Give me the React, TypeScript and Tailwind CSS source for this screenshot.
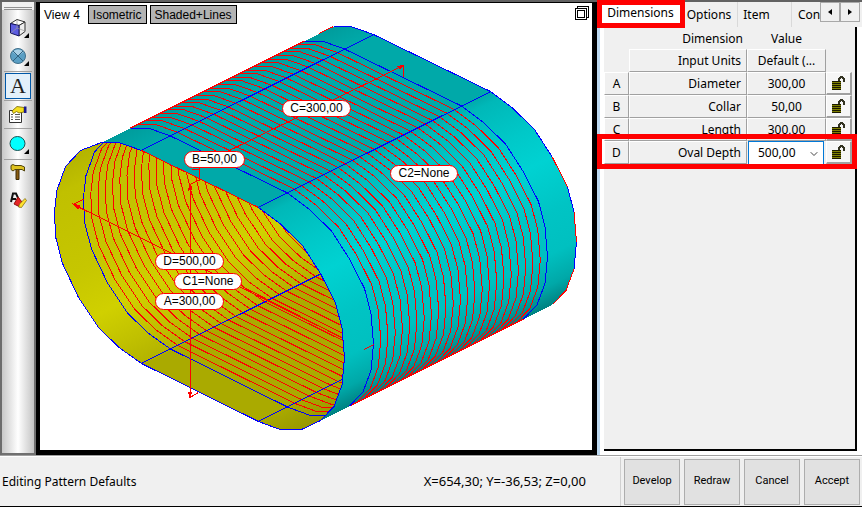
import type { ReactNode } from "react";
import { ChevronDown } from "lucide-react";

type Point = [number, number];

/* Profile of the oval duct, clockwise from the upper tangent point. */
const OUTER_ARC: Point[] = [
  [101.5, 142.5], [119, 142.5], [141.5, 150.5], [258.5, 207.5], [280, 223.5], [302.5, 245.5],
  [320.5, 273.5], [335.5, 303], [342, 328], [344.5, 358], [342, 385], [334, 406.5], [320.5, 420.5],
];
const INNER_ARC: Point[] = [
  [320.5, 420.5], [301.5, 429.5], [280, 429.5], [258.5, 421.5], [141.5, 363.5], [119, 347.5],
  [98.5, 327.5], [78.5, 297.5], [62.5, 263.5], [55.5, 236.5], [54.5, 211.5], [57, 190],
  [65.5, 166.5], [80.5, 150.5], [101.5, 142.5],
];
const AXIS: Point = [232, -116];

const shift = (points: Point[], t: number): string =>
  points.map(([x, y]) => `${(x + AXIS[0] * t).toFixed(1)},${(y + AXIS[1] * t).toFixed(1)}`).join(" ");

const STEPS = Array.from({ length: 23 }, (_, i) => 0.125 + ((i + 1) * 0.75) / 24);
const FACE = `${shift(OUTER_ARC, 0)} ${shift(INNER_ARC, 0)}`;
const BODY = `${shift(OUTER_ARC, 1)} ${shift([...OUTER_ARC].reverse(), 0)}`;

const TAGS = [
  { text: "C=300,00", x: 282, y: 100, w: 69 },
  { text: "B=50,00", x: 184, y: 151, w: 61 },
  { text: "C2=None", x: 390, y: 165, w: 68 },
  { text: "D=500,00", x: 155, y: 253, w: 69 },
  { text: "C1=None", x: 174, y: 273, w: 68 },
  { text: "A=300,00", x: 155, y: 293, w: 69 },
];

function Model() {
  return (
    <svg viewBox="40 3 552 447" className="absolute inset-0 h-full w-full" preserveAspectRatio="xMinYMin meet" role="img" aria-label="Oval duct">
      <defs>
        <linearGradient id="outside" gradientUnits="userSpaceOnUse" x1="101.7" y1="142.3" x2="256.4" y2="451.6">
          <stop offset="0" stopColor="#009c9c" />
          <stop offset="0.07" stopColor="#00a9a9" />
          <stop offset="0.37" stopColor="#00a9a9" />
          <stop offset="0.4" stopColor="#00b8b8" />
          <stop offset="0.52" stopColor="#00c8c8" />
          <stop offset="0.62" stopColor="#00d2d2" />
          <stop offset="0.76" stopColor="#00c4c4" />
          <stop offset="0.87" stopColor="#00c0c0" />
          <stop offset="0.95" stopColor="#00a8a8" />
          <stop offset="1" stopColor="#008484" />
        </linearGradient>
        <linearGradient id="inside" gradientUnits="userSpaceOnUse" x1="101.7" y1="142.3" x2="256.4" y2="451.6">
          <stop offset="0" stopColor="#b4b400" />
          <stop offset="0.08" stopColor="#c0c000" />
          <stop offset="0.3" stopColor="#c6c600" />
          <stop offset="0.44" stopColor="#d0d000" />
          <stop offset="0.55" stopColor="#c0c000" />
          <stop offset="0.62" stopColor="#b4b400" />
          <stop offset="0.63" stopColor="#aaaa00" />
          <stop offset="0.92" stopColor="#aaaa00" />
          <stop offset="1" stopColor="#989800" />
        </linearGradient>
        <clipPath id="opening"><polygon points={FACE} /></clipPath>
      </defs>

      <g fill="none" strokeWidth="1" shapeRendering="crispEdges">
        <polygon points={BODY} fill="url(#outside)" />
        <g stroke="#ff0000">
          {STEPS.map((t) => <polyline key={t} points={shift(OUTER_ARC, t)} />)}
          <path d="M130.5 128L304.5 41M349.5 406L523.5 319" />
        </g>
        <g stroke="#0000ff">
          <polyline points={shift(OUTER_ARC, 0.125)} />
          <polyline points={shift(OUTER_ARC, 0.875)} />
          <polyline points={shift(OUTER_ARC, 1)} />
          <path d="M141.5 150.3L373.2 34.8M258.5 207.3L490.2 91.8" />
        </g>
        <path stroke="#ff0000" d="M319 33.5L333.5 26.5M552.5 157.5L567.5 187M574 212L576.5 242M574 269L566 290.5L552.5 304.500" />

        <polygon points={FACE} fill="url(#inside)" />
        <g clipPath="url(#opening)">
          <g stroke="#ff0000">
            {STEPS.map((t) => <polyline key={t} points={shift(INNER_ARC, t)} />)}
          </g>
          <g stroke="#0000ff">
            <polyline points={shift(INNER_ARC, 0.125)} />
            <path d="M141.5 363.3L373.2 247.8M258.5 421.3L490.2 305.8" />
          </g>
          <path stroke="#ff0000" d="M73.5 204.5L364 348.5M243 287L350 342M73.5 204.5L84 199" />
        </g>
        <polygon points={FACE} stroke="#0000ff" />
        <path stroke="#ff0000" d="M141.5 150.5L258.5 207.5" />

        <g stroke="#ff0000">
          <path d="M215 157.5L403.5 65.5V77M199.5 168V180L190 184.5V397.5L198.5 392.5" />
          <path d="M192 169.5H199M364 349.5L374 344.5" />
          <path fill="#ff0000" d="M188.5 190L190 184L192 189ZM188.5 392L190 397.5L191.5 392ZM398 66.5L403 65.5L400 69ZM73 204L80 206L78 209Z" />
        </g>
      </g>

      <g stroke="#000000" strokeWidth="1" fill="#ffffff" shapeRendering="crispEdges">
        <rect x="577.5" y="6.500" width="11" height="11" />
        <rect x="575.5" y="8.500" width="11" height="11" />
        <rect x="577.5" y="10.500" width="7" height="7" />
      </g>

      {TAGS.map((tag) => (
        <g key={tag.text}>
          <rect x={tag.x + 0.5} y={tag.y + 0.5} width={tag.w - 1} height="16" rx="8" fill="#ffffff" stroke="#ff0000" />
          <text x={tag.x + tag.w / 2} y={tag.y + 12} textAnchor="middle" className="font-['Liberation_Sans',sans-serif] text-[12px]">{tag.text}</text>
        </g>
      ))}
    </svg>
  );
}

function Icon({ children }: { children: ReactNode }) {
  return <svg viewBox="0 0 20 20" width="20" height="20" aria-hidden="true">{children}</svg>;
}

function Tool({ label, menu, active, children }: { label: string; menu?: boolean; active?: boolean; children: ReactNode }) {
  const look = active
    ? "h-[26px] border border-[#0058a8] bg-[#e3f0fa]"
    : menu
      ? "relative h-7"
      : "h-[25px]";
  return (
    <button type="button" aria-label={label} aria-pressed={active} className={`flex w-[26px] shrink-0 items-center justify-center ${look}`}>
      {children}
      {menu && (
        <svg className="absolute right-0.5 bottom-1" width="5" height="5" viewBox="0 0 5 5" aria-hidden="true"><path d="M5 0V5H0Z" /></svg>
      )}
    </button>
  );
}

const Divider = () => <div className="my-px h-px w-7 shrink-0 bg-[#a0a0a0]" />;

function Toolbar() {
  return (
    <div role="toolbar" className="flex w-[34px] shrink-0 flex-col items-center border-r-2 border-b-2 border-[#707070] bg-linear-to-r from-[#c8c8c8] via-white via-50% to-[#c4c4c4]">
      <div className="mb-1 flex h-2 w-full shrink-0 flex-col justify-end gap-px bg-[#f0f0f0] px-0.5">
        <div className="h-px bg-[#909090]" />
        <div className="h-px bg-[#909090]" />
      </div>
      <Tool label="View cube" menu>
        <Icon>
          <path d="M2.500 5.500L9 1.500L17 4L11 7.500Z" fill="#fff" stroke="#333" />
          <path d="M11 7.500L17 4V13.500L11 18Z" fill="#eee" stroke="#333" />
          <path d="M2.500 5.500L11 7.500V18L2.500 15Z" fill="#5c5ce0" stroke="#151560" />
          <path d="M9 2V10L17 13M9 10L3 15" fill="none" stroke="#999" strokeWidth="0.7" />
        </Icon>
      </Tool>
      <Tool label="Shading" menu>
        <Icon>
          <circle cx="10" cy="10" r="7.500" fill="#5b9fc4" stroke="#416f8a" />
          <path d="M4.500 6C7 2.500 13 2.500 15.500 6L10 10Z" fill="#a9d0e6" />
          <path d="M5 5L15 15M15 5L5 15" stroke="#2f617f" />
        </Icon>
      </Tool>
      <Divider />
      <Tool label="Annotation" active>
        <span className="font-['Liberation_Serif',serif] text-[22px] leading-5 text-[#222]">A</span>
      </Tool>
      <Divider />
      <Tool label="Properties">
        <Icon>
          <path d="M1.500 5.500H13.500V17.500H1.500Z" fill="#fff" stroke="#333" />
          <path d="M3 9.500H5M3 12H5M3 14.500H5M7 9.500H12M7 12H12M7 14.500H12" stroke="#555" />
          <path d="M4 6L9 1.500L16 2.500V7L11 8L8.500 6.500L5.500 8.500Z" fill="#f4df20" stroke="#706000" strokeWidth="0.8" />
          <path d="M16 1.500H18.500V8H16Z" fill="#1b1b8c" />
        </Icon>
      </Tool>
      <Divider />
      <Tool label="Shape" menu>
        <Icon><ellipse cx="9.500" cy="9.500" rx="7.500" ry="7" fill="#00ffff" stroke="#175050" /></Icon>
      </Tool>
      <Divider />
      <Tool label="Build">
        <Icon>
          <path d="M8 5.500H11V15.500H8Z" fill="#8b5d12" stroke="#3b2905" />
          <path d="M3 1.500L5 0.500L7 1.500H13L16.500 3V7L14 5.500H7L5 7L3 5.500Z" fill="#dec220" stroke="#51440b" />
        </Icon>
      </Tool>
      <Tool label="Format">
        <Icon>
          <path d="M3 13L5 4.500H8L11 11M4 10H8" fill="none" stroke="#111" strokeWidth="2" />
          <path d="M6 15L10 8L14 13L12 18Z" fill="#e52525" stroke="#901010" />
          <path d="M11.500 15L17 9.500L18.500 11.500L13.500 18.500L10.500 18Z" fill="#ffe12e" stroke="#71600c" strokeWidth="0.7" />
        </Icon>
      </Tool>
    </div>
  );
}

function Lock() {
  return (
    <svg width="15" height="14" viewBox="0 0 15 14" aria-hidden="true" shapeRendering="crispEdges">
      <path d="M7 5V2H8V1H9V0H12V1H13V2H14V6H12V3H11V2H10V3H9V5Z" fill="#333322" />
      <path d="M1 5H10V14H1Z" fill="#808000" />
      <path d="M1 5H10V6H1ZM1 7H10V8H1ZM1 9H10V10H1ZM1 11H10V12H1ZM1 13H10V14H1Z" fill="#1a1a00" />
    </svg>
  );
}

const ROWS = [
  { id: "A", name: "Diameter", value: "300,00" },
  { id: "B", name: "Collar", value: "50,00" },
  { id: "C", name: "Length", value: "300,00" },
  { id: "D", name: "Oval Depth", value: "500,00", editing: true },
];

const CELL = "h-[23px] border-t border-r border-b border-l border-t-white border-l-white border-r-[#a0a0a0] border-b-[#a0a0a0] p-0 font-normal";

function Dimensions() {
  return (
    <table className="w-[248px] table-fixed border-separate border-spacing-0 text-[12px] leading-4">
      <colgroup>
        <col className="w-[25px]" /><col className="w-[118px]" /><col className="w-[79px]" /><col className="w-[26px]" />
      </colgroup>
      <thead>
        <tr className="h-[22px]">
          <td className="p-0" />
          <th className="p-0 pt-0.5 pr-1 text-right font-normal">Dimension</th>
          <th className="p-0 pt-0.5 font-normal">Value</th>
          <td className="p-0" />
        </tr>
      </thead>
      <tbody>
        <tr>
          <td className="p-0" />
          <th scope="row" className={`${CELL} pr-[5px] text-right`}>Input Units</th>
          <td className={`${CELL} text-center`}>Default (...</td>
          <td className="p-0" />
        </tr>
        {ROWS.map((row) => (
          <tr key={row.id}>
            <td className={`${CELL} text-center`}>{row.id}</td>
            <th scope="row" className={`${CELL} pr-[5px] text-right`}>{row.name}</th>
            <td className={row.editing ? "h-[23px] p-0" : `${CELL} text-center`}>
              {row.editing ? (
                <div className="relative h-[23px] pr-0.5 pl-px">
                  <select aria-label={row.name} className="h-6 w-full appearance-none border border-[#0078d7] bg-white pl-[9px]">
                    <option>{row.value}</option>
                  </select>
                  <ChevronDown size={12} strokeWidth={2} className="pointer-events-none absolute top-[7px] right-1.5 text-[#444]" />
                </div>
              ) : (
                row.value
              )}
            </td>
            <td className="h-[23px] p-0">
              <button type="button" aria-label={`Lock ${row.name}`} className="flex h-[23px] w-[26px] items-center justify-center border-r-2 border-b-2 border-t border-l border-t-white border-l-white border-r-[#a0a0a0] border-b-[#a0a0a0] bg-[#f6f6f6]">
                <Lock />
              </button>
            </td>
          </tr>
        ))}
      </tbody>
    </table>
  );
}

function SidePanel() {
  return (
    <aside className="relative flex w-[265px] shrink-0 flex-col border-l-[3px] border-[#bdd9f1] bg-white">
      <div role="tablist" className="flex h-[25px] shrink-0 bg-[#f0f0f0] text-[12px] leading-4">
        <button type="button" role="tab" aria-selected="true" className="w-[85px] bg-white pr-1 pb-1">
          Dimensions
        </button>
        <button type="button" role="tab" className="w-[53px] border-r border-[#d9d9d9] pr-1">Options</button>
        <button type="button" role="tab" className="w-[54px] border-r border-[#d9d9d9] pr-4">Item</button>
        <button type="button" role="tab" className="w-7 pl-1.5 text-left whitespace-nowrap">Con</button>
        <button type="button" aria-label="Previous tabs" className="flex h-5 w-5 items-center justify-center border border-[#a8a8a8] bg-[#f0f0f0]">
          <svg width="4" height="6" viewBox="0 0 4 6"><path d="M4 0V6L0 3Z" /></svg>
        </button>
        <button type="button" aria-label="Next tabs" className="flex h-5 w-5 items-center justify-center border border-[#a8a8a8] bg-[#f0f0f0]">
          <svg width="4" height="6" viewBox="0 0 4 6"><path d="M0 0V6L4 3Z" /></svg>
        </button>
      </div>
      <div className="mr-[5px] mb-1 ml-1 flex-1 border-r-2 border-b-2 border-black bg-[#f0f0f0]">
        <Dimensions />
      </div>
      <div className="pointer-events-none absolute -top-0.5 -left-[3px] h-[28px] w-[88px] border-[5px] border-[#ff0000]" />
      <div className="pointer-events-none absolute top-[132px] -left-[3px] h-[35px] w-[260px] border-[5px] border-[#ff0000]" />
    </aside>
  );
}

const ACTIONS = ["Develop", "Redraw", "Cancel", "Accept"];

export default function App() {
  return (
    <div className="flex h-screen flex-col border-t-2 border-b border-t-[#626262] border-b-black bg-[#f0f0f0] font-['Noto_Sans','Open_Sans',sans-serif] text-black">
      <main className="flex min-h-0 flex-1 border-b border-[#a0a0a0] bg-white">
        <div className="flex shrink-0 bg-[#6c6c6c] pl-0.5"><Toolbar /></div>
        <section className="relative min-w-0 flex-1 border-t border-r-[5px] border-b-[5px] border-l-4 border-black bg-white font-['Liberation_Sans',sans-serif]">
          <Model />
          <div className="relative flex items-center gap-[3px] pt-0.5 pl-1 text-[12px]">
            <span className="mr-[5px] leading-[18px]">View 4</span>
            <button type="button" className="h-[19px] border border-black bg-[#b3b3b3] px-1 leading-4">Isometric</button>
            <button type="button" className="h-[19px] border border-black bg-[#b3b3b3] px-1 leading-4">Shaded+Lines</button>
          </div>
        </section>
        <SidePanel />
      </main>
      <footer className="flex h-[50px] shrink-0 items-center border-t border-white pr-0.5 text-[12px]">
        <p className="flex-1 pl-0.5">Editing Pattern Defaults</p>
        <p className="mr-[34px] text-[13px]">X=654,30; Y=-36,53; Z=0,00</p>
        <div className="flex h-full items-center gap-1 border-l border-[#d0d0d0] pl-[3px]">
          {ACTIONS.map((name) => (
            <button key={name} type="button" className="h-[46px] w-14 border border-[#adadad] bg-[#e1e1e1] font-[Roboto,sans-serif] text-[11px]">
              {name}
            </button>
          ))}
        </div>
      </footer>
    </div>
  );
}
